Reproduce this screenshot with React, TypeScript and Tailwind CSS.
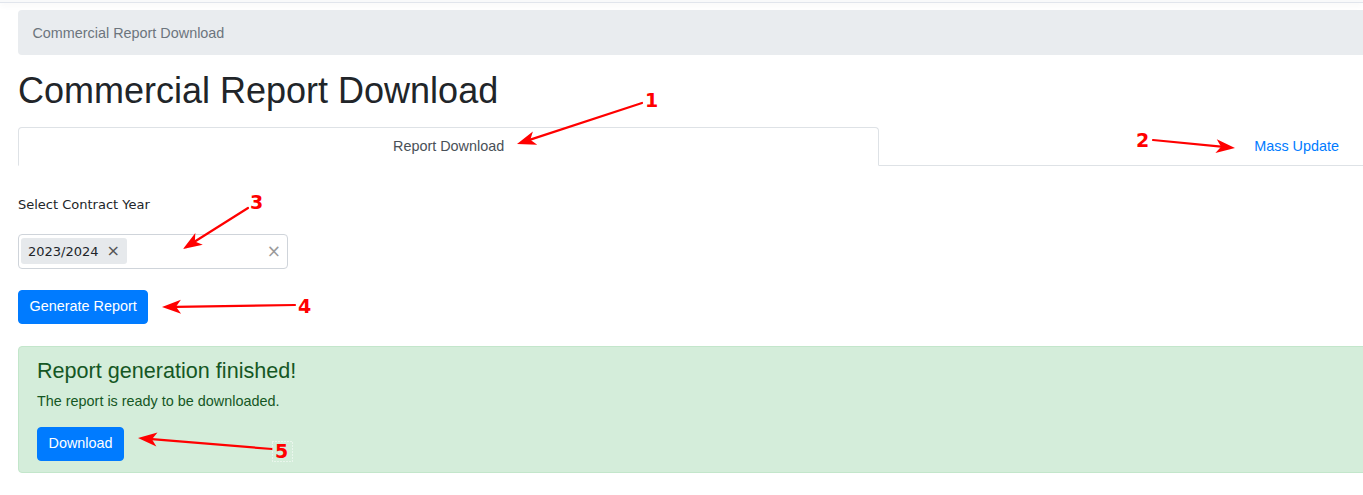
import React from "react";

function Arrow({ x1, y1, x2, y2 }: { x1: number; y1: number; x2: number; y2: number }) {
  const dx = x2 - x1;
  const dy = y2 - y1;
  const len = Math.hypot(dx, dy);
  const ux = dx / len;
  const uy = dy / len;
  const px = -uy;
  const py = ux;
  const hl = 19;
  const hw = 7;
  const bx = x2 - ux * hl;
  const by = y2 - uy * hl;
  const nx = x2 - ux * (hl - 5);
  const ny = y2 - uy * (hl - 5);
  const pts = [
    [x2, y2],
    [bx + px * hw, by + py * hw],
    [nx, ny],
    [bx - px * hw, by - py * hw],
  ]
    .map((p) => p.join(","))
    .join(" ");
  return (
    <g>
      <line x1={x1} y1={y1} x2={nx} y2={ny} stroke="#ff0000" strokeWidth={2.2} strokeLinecap="round" />
      <polygon points={pts} fill="#ff0000" />
    </g>
  );
}

function Num({ x, y, t }: { x: number; y: number; t: string }) {
  return (
    <text x={x} y={y} fill="#ff0000" fontFamily="'DejaVu Sans', sans-serif" fontWeight={700} fontSize={19}>
      {t}
    </text>
  );
}

export default function App() {
  return (
    <div className="relative w-[1363px] h-[495px] overflow-hidden bg-white text-[#212529] font-['Liberation_Sans',Arial,sans-serif] text-[14.4px] leading-[1.5]">
      <div className="h-[3px] bg-[#f8f9fa] border-b border-[#e1e5ec] shadow-[0_2px_6px_rgba(0,0,0,0.05)]" />
      <div className="ml-[18px] w-[1696px]">
        <div className="mt-[7px] h-[45px] flex items-center pt-[2px] pl-[14.4px] bg-[#e9ecef] rounded-[4px] text-[#6c757d]">
          Commercial Report Download
        </div>
        <h1 className="mt-[14px] mb-[15px] text-[36px] leading-[1.2] font-normal text-[#212529]">
          Commercial Report Download
        </h1>
        <div className="flex border-b border-[#dee2e6]">
          <div className="flex-auto text-center -mb-px border border-[#dee2e6] border-b-white rounded-t-[4px] bg-white pt-[8px] pb-[7.6px] px-[14.4px] text-[#495057]">
            Report Download
          </div>
          <div className="flex-auto text-center -mb-px border border-transparent pt-[8px] pb-[7.6px] px-[14.4px] text-[#007bff]">
            Mass Update
          </div>
        </div>
        <div className="mt-[29px] font-['DejaVu_Sans',sans-serif] text-[13px] leading-[19px] text-[#212529]">
          Select Contract Year
        </div>
        <div className="mt-[19.6px] w-[270px] h-[35px] border border-[#cfd4da] rounded-[4px] flex items-center pl-[2px] pr-[6px] font-['DejaVu_Sans',sans-serif]">
          <div className="h-[26px] flex items-center pl-[7px] pr-[7px] bg-[#e6e9ec] rounded-[3px] text-[13px] text-[#212529]">
            <span>2023/2024</span>
            <span className="ml-[8px] text-[16px] leading-none text-[#555]">×</span>
          </div>
          <div className="flex-1" />
          <span className="text-[17px] leading-none text-[#9a9a9a]">×</span>
        </div>
        <button className="mt-[21px] h-[34.4px] px-[10.5px] bg-[#007bff] text-white rounded-[4px] border border-[#007bff] text-[14.4px] leading-[21.6px] block">
          Generate Report
        </button>
        <div className="mt-[21.6px] w-[1696px] bg-[#d4edda] border border-[#c3e6cb] rounded-[4px] text-[#155724] px-[18px] py-[10.8px]">
          <h4 className="text-[21.6px] leading-[1.2] mb-[7.2px] font-normal">Report generation finished!</h4>
          <p className="mb-[14.4px] leading-[21.6px]">The report is ready to be downloaded.</p>
          <button className="h-[34.4px] px-[10.5px] bg-[#007bff] text-white rounded-[4px] border border-[#007bff] text-[14.4px] leading-[21.6px] block">
            Download
          </button>
        </div>
      </div>
      <svg className="absolute left-0 top-0 pointer-events-none" width={1363} height={495}>
        <Arrow x1={642} y1={103} x2={517} y2={144} />
        <Num x={645} y={107} t="1" />
        <Arrow x1={1153} y1={140} x2={1235} y2={148} />
        <Num x={1136} y={147} t="2" />
        <Arrow x1={248} y1={208} x2={183} y2={249} />
        <Num x={250} y={209} t="3" />
        <Arrow x1={295} y1={305} x2={162} y2={307} />
        <Num x={298} y={313} t="4" />
        <Arrow x1={272} y1={449} x2={138} y2={438} />
        <rect x={272.5} y={441.5} width={20} height={20} fill="none" stroke="#ffffff" strokeWidth={1} strokeDasharray="1 2" />
        <Num x={275} y={458} t="5" />
      </svg>
    </div>
  );
}
